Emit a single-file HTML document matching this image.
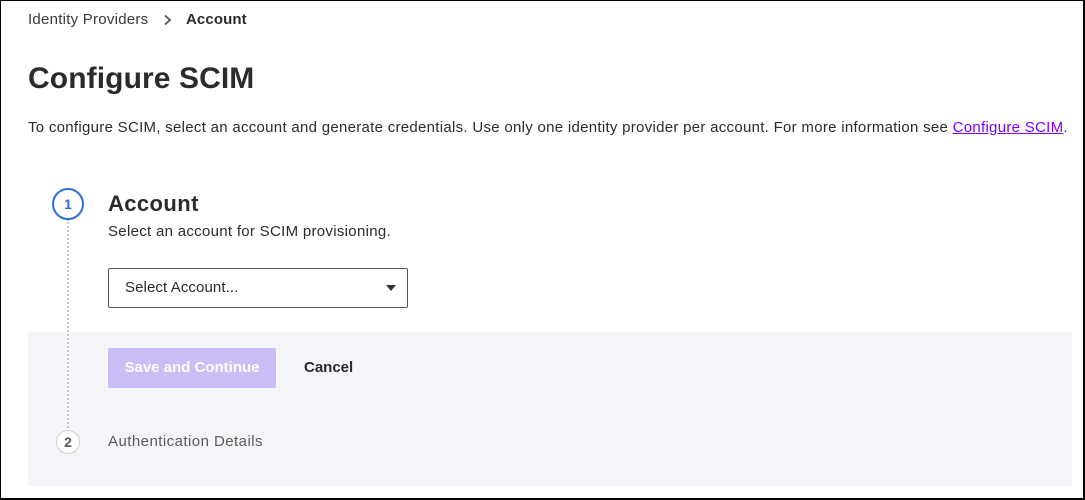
<!DOCTYPE html>
<html><head><meta charset="utf-8"><style>
*{box-sizing:border-box;margin:0;padding:0}
html,body{width:1085px;height:500px;overflow:hidden;background:#fff}
body{font-family:"Liberation Sans",sans-serif;color:#2d2a2e;position:relative}
.frame{position:absolute;left:0;top:0;width:1085px;height:500px;border:1px solid #000;border-right:2px solid #000;border-bottom:2px solid #000}
.a{position:absolute;white-space:nowrap}
</style></head><body>
<div class="frame"></div>
<div class="a" style="left:28px;top:11px;font-size:15px;color:#3a3a3a;letter-spacing:0.25px">Identity Providers</div>
<svg class="a" style="left:163px;top:14px" width="10" height="12" viewBox="0 0 10 12"><path d="M2 1.5 L7 6 L2 10.5" fill="none" stroke="#555" stroke-width="1.8"/></svg>
<div class="a" style="left:186px;top:11px;font-size:15px;font-weight:bold;color:#2d2a2e;letter-spacing:0.1px">Account</div>
<div class="a" style="left:28px;top:62px;font-size:30px;font-weight:bold;color:#2d2a2e;letter-spacing:0.1px">Configure SCIM</div>
<div class="a" style="left:28px;top:119px;font-size:15px;color:#2d2a2e;letter-spacing:0.29px">To configure SCIM, select an account and generate credentials. Use only one identity provider per account. For more information see <span style="color:#7a00ff;text-decoration:underline">Configure SCIM</span>.</div>
<div class="a" style="left:28px;top:332px;width:1044px;height:154px;background:#f4f5f9"></div>
<div class="a" style="left:67px;top:219px;height:232px;border-left:2px dotted #c6c6c6"></div>
<div class="a" style="left:52px;top:188px;width:32px;height:32px;border:2px solid #2f6fd6;border-radius:50%;background:#fff;text-align:center;line-height:28px;font-size:14px;font-weight:bold;color:#2f6fd6">1</div>
<div class="a" style="left:56px;top:430px;width:24px;height:24px;border:1px solid #d0d0d0;border-radius:50%;background:#fff;text-align:center;line-height:22px;font-size:14px;font-weight:bold;color:#555">2</div>
<div class="a" style="left:108px;top:191px;font-size:22px;font-weight:bold;color:#2d2a2e;letter-spacing:0.4px">Account</div>
<div class="a" style="left:108px;top:223px;font-size:15px;color:#2d2a2e;letter-spacing:0.3px">Select an account for SCIM provisioning.</div>
<div class="a" style="left:108px;top:268px;width:300px;height:40px;border:1px solid #555;border-radius:2px;background:#fff"></div>
<div class="a" style="left:125px;top:279px;font-size:15px;color:#2d2a2e;letter-spacing:0.1px">Select Account...</div>
<svg class="a" style="left:386px;top:285px" width="10" height="6"><path d="M0 0 H10 L5 6Z" fill="#333"/></svg>
<div class="a" style="left:108px;top:348px;width:168px;height:40px;background:#cdbdf7;border-radius:2px;color:#fff;font-size:15px;font-weight:bold;text-align:center;line-height:40px">Save and Continue</div>
<div class="a" style="left:304px;top:359px;font-size:15px;font-weight:bold;color:#2d2a2e">Cancel</div>
<div class="a" style="left:108px;top:433px;font-size:15px;color:#5a5a5a;letter-spacing:0.45px">Authentication Details</div>
</body></html>
